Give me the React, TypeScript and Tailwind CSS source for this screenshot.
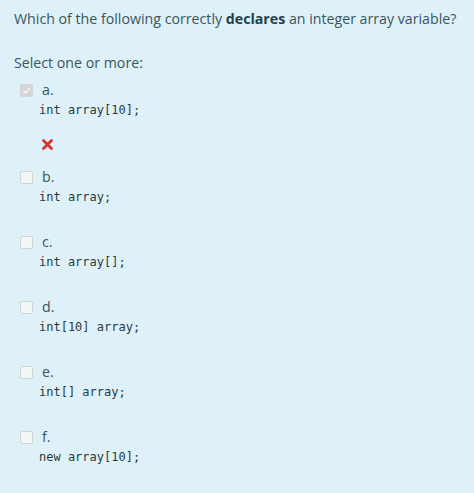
import React from "react";

const options = [
  { l: "a.", code: "int array[10];", checked: true, wrong: true },
  { l: "b.", code: "int array;" },
  { l: "c.", code: "int array[];" },
  { l: "d.", code: "int[10] array;" },
  { l: "e.", code: "int[] array;" },
  { l: "f.", code: "new array[10];" },
];

function Box({ checked }: { checked?: boolean }) {
  if (checked) {
    return (
      <span className="w-[13px] h-[13px] rounded-[2px] bg-[#d4d6d7] flex items-center justify-center">
        <svg width="9" height="9" viewBox="0 0 10 10">
          <path d="M1.5 5.2 L4 7.6 L8.5 2.2" stroke="#f4f4f4" strokeWidth="1.6" fill="none" />
        </svg>
      </span>
    );
  }
  return <span className="w-[13px] h-[13px] rounded-[2px] border border-[#cfd4d6] bg-[#f3f6f7]" />;
}

export default function App() {
  return (
    <div className="w-[474px] h-[493px] bg-[#def1f8] pl-[14px] pt-[8px] text-[#3a5561]" style={{ fontFamily: '"Open Sans", sans-serif' }}>
      <div className="text-[14.2px] leading-[22px] whitespace-nowrap">
        Which of the following correctly <b className="font-bold text-[#23404e]">declares</b> an integer array variable?
      </div>
      <div className="mt-[22px] text-[14.2px] leading-[22px]">Select one or more:</div>
      <div className="mt-[5px] flex flex-col">
        {options.map((o) => (
          <div key={o.l} className={`flex flex-col ${o.wrong ? "h-[87px]" : "h-[65px]"}`}>
            <div className="flex items-center h-[22px] pl-[6px]">
              <Box checked={o.checked} />
              <span className="ml-[9px] text-[14.2px]">{o.l}</span>
            </div>
            <div className="pl-[25px] text-[12px] leading-[18px] text-[#2c3a40]" style={{ fontFamily: '"DejaVu Sans Mono", monospace' }}>
              {o.code}
            </div>
            {o.wrong && (
              <div className="pl-[28px] mt-[20px] flex">
                <svg width="11" height="11" viewBox="0 0 11 11">
                  <path d="M1.5 1.5 L9.5 9.5 M9.5 1.5 L1.5 9.5" stroke="#d8322d" strokeWidth="2.8" strokeLinecap="round" />
                </svg>
              </div>
            )}
          </div>
        ))}
      </div>
    </div>
  );
}
